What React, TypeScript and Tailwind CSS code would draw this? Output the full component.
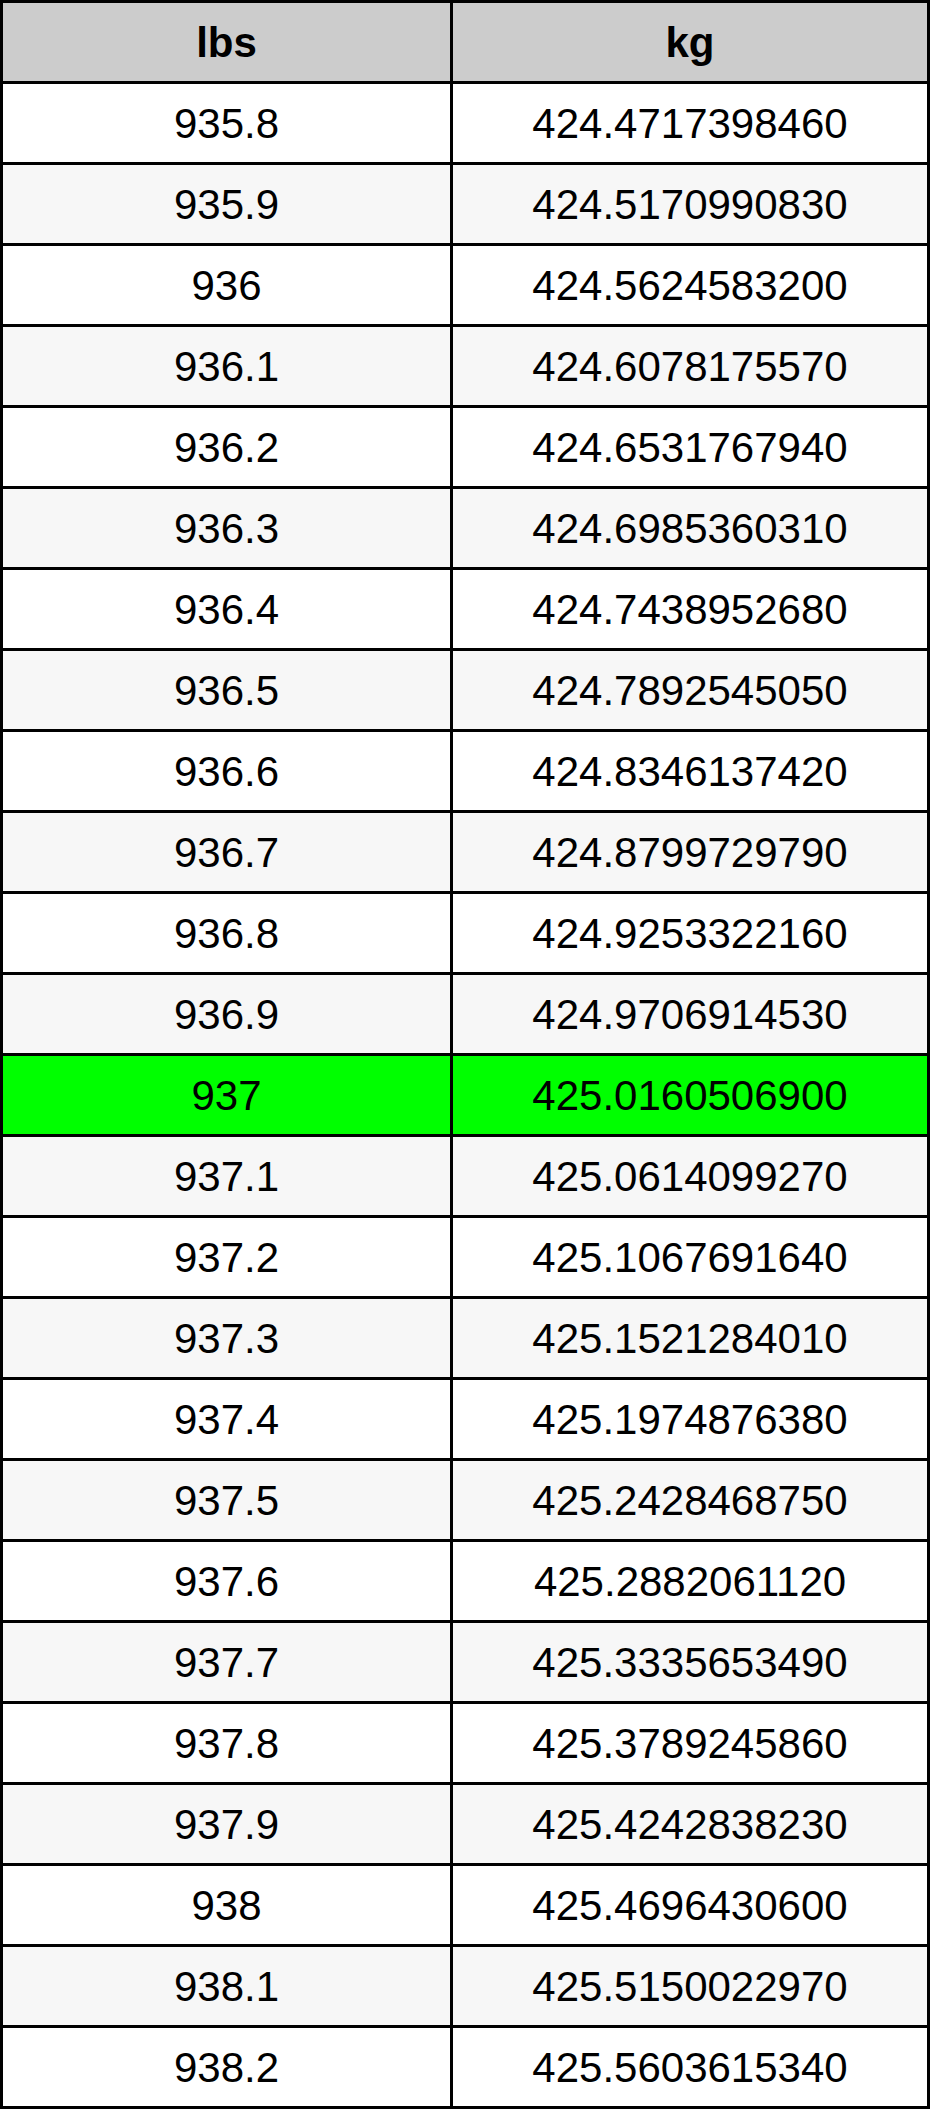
import React from 'react';

const rows: [string, string][] = [
  ['935.8', '424.4717398460'],
  ['935.9', '424.5170990830'],
  ['936', '424.5624583200'],
  ['936.1', '424.6078175570'],
  ['936.2', '424.6531767940'],
  ['936.3', '424.6985360310'],
  ['936.4', '424.7438952680'],
  ['936.5', '424.7892545050'],
  ['936.6', '424.8346137420'],
  ['936.7', '424.8799729790'],
  ['936.8', '424.9253322160'],
  ['936.9', '424.9706914530'],
  ['937', '425.0160506900'],
  ['937.1', '425.0614099270'],
  ['937.2', '425.1067691640'],
  ['937.3', '425.1521284010'],
  ['937.4', '425.1974876380'],
  ['937.5', '425.2428468750'],
  ['937.6', '425.2882061120'],
  ['937.7', '425.3335653490'],
  ['937.8', '425.3789245860'],
  ['937.9', '425.4242838230'],
  ['938', '425.4696430600'],
  ['938.1', '425.5150022970'],
  ['938.2', '425.5603615340'],
];

const App: React.FC = () => {
  return (
    <div className="w-[930px] bg-white font-['Liberation_Sans',Arial,sans-serif] text-black">
      <div className="grid grid-cols-[447px_474px] gap-[3px] bg-black p-[3px]">
        {/* Header */}
        <div className="h-[78px] flex items-center justify-center bg-[#cccccc] text-[42px] font-bold">lbs</div>
        <div className="h-[78px] flex items-center justify-center bg-[#cccccc] text-[42px] font-bold">kg</div>

        {rows.map(([lbs, kg], i) => {
          const bg = lbs === '937' ? 'bg-[#00ff00]' : i % 2 === 1 ? 'bg-[#f7f7f7]' : 'bg-white';
          return (
            <React.Fragment key={lbs}>
              <div className={`h-[78px] flex items-center justify-center text-[42px] ${bg}`}>{lbs}</div>
              <div className={`h-[78px] flex items-center justify-center text-[42px] ${bg}`}>{kg}</div>
            </React.Fragment>
          );
        })}
      </div>
    </div>
  );
};

export default App;
